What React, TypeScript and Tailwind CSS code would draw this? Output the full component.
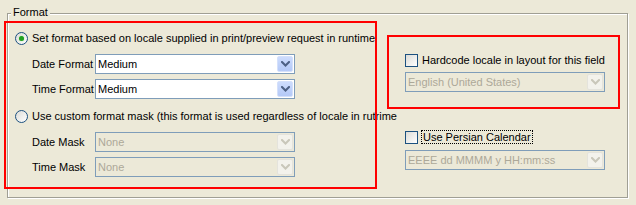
import React from "react";

function Chevron({ color }: { color: string }) {
  return (
    <svg width="9" height="6" viewBox="0 0 9 6" className="block">
      <path d="M1 1 L4.5 4.5 L8 1" fill="none" stroke={color} strokeWidth="2" strokeLinecap="square" />
    </svg>
  );
}

function Combo({ value, disabled = false }: { value: string; disabled?: boolean }) {
  return (
    <div
      className={`w-[200px] h-[20px] border border-[#7f9db9] flex items-center p-[1px] ${
        disabled ? "bg-[#ece9d8]" : "bg-white"
      }`}
    >
      <span
        className={`flex-1 pl-[1px] text-[11px] leading-[13px] whitespace-nowrap ${
          disabled ? "text-[#aca899]" : "text-black"
        }`}
      >
        {value}
      </span>
      {disabled ? (
        <div className="w-[16px] h-[16px] rounded-[2px] border border-[#e4e3dc] bg-[#f3f2ec] flex items-center justify-center">
          <Chevron color="#c9c7ba" />
        </div>
      ) : (
        <div className="w-[16px] h-[16px] rounded-[2px] border border-[#d4e0fb] bg-linear-to-b from-[#cddcfd] to-[#b4c9f7] flex items-center justify-center">
          <Chevron color="#4d6185" />
        </div>
      )}
    </div>
  );
}

function Radio({ checked = false }: { checked?: boolean }) {
  return (
    <div className="w-[13px] h-[13px] shrink-0 rounded-full border border-[#1c5180] bg-linear-to-br from-[#dcdcd7] to-white flex items-center justify-center">
      {checked && <div className="w-[5px] h-[5px] rounded-full bg-[#21a121] shadow-[0_0_1px_#7fd67f]" />}
    </div>
  );
}

function Check() {
  return <div className="w-[13px] h-[13px] shrink-0 border border-[#1c5180] bg-linear-to-br from-[#dcdcd7] to-white" />;
}

function LabeledCombo({ label, value, disabled }: { label: string; value: string; disabled?: boolean }) {
  return (
    <div className="flex items-center ml-[17px]">
      <span className="w-[63px] text-[11px] leading-[13px] whitespace-nowrap">{label}</span>
      <Combo value={value} disabled={disabled} />
    </div>
  );
}

export default function App() {
  return (
    <div className="relative w-[636px] h-[205px] bg-[#ece9d8] overflow-hidden text-black font-['Liberation_Sans',Arial,sans-serif] pt-[13px] pl-[7px]">
      <div className="relative w-[621px] h-[185px] border border-[#a09f94] shadow-[inset_1px_1px_0_#fff,1px_1px_0_#fff]">
        <span className="absolute left-[3px] top-[-8px] px-[2px] bg-[#ece9d8] text-[11px] leading-[13px]">Format</span>

        <div className="flex">
          {/* left column */}
          <div className="w-[380px] pl-[7px] pt-[15px] flex flex-col">
            <div className="h-[18px] flex items-center gap-[4px]">
              <Radio checked />
              <span className="text-[11px] leading-[13px] whitespace-nowrap">
                Set format based on locale supplied in print/preview request in runtime
              </span>
            </div>
            <div className="mt-[7px]">
              <LabeledCombo label="Date Format" value="Medium" />
            </div>
            <div className="mt-[5px]">
              <LabeledCombo label="Time Format" value="Medium" />
            </div>
            <div className="mt-[8px] h-[18px] flex items-center gap-[4px]">
              <Radio />
              <span className="text-[11px] leading-[13px] whitespace-nowrap">
                Use custom format mask (this format is used regardless of locale in rutrime
              </span>
            </div>
            <div className="mt-[7px]">
              <LabeledCombo label="Date Mask" value="None" disabled />
            </div>
            <div className="mt-[5px]">
              <LabeledCombo label="Time Mask" value="None" disabled />
            </div>
          </div>

          {/* right column */}
          <div className="flex-1 pl-[17px] pt-[37px] flex flex-col">
            <div className="h-[18px] flex items-center gap-[4px]">
              <Check />
              <span className="text-[11px] leading-[13px] whitespace-nowrap">Hardcode locale in layout for this field</span>
            </div>
            <div className="mt-[3px]">
              <Combo value="English (United States)" disabled />
            </div>
            <div className="mt-[36px] h-[18px] flex items-center gap-[3px]">
              <Check />
              <span className="text-[11px] leading-[12px] whitespace-nowrap border border-dotted border-black px-[1px]">
                Use Persian Calendar
              </span>
            </div>
            <div className="mt-[4px]">
              <Combo value="EEEE dd MMMM y HH:mm:ss" disabled />
            </div>
          </div>
        </div>
      </div>

      {/* red annotation frames */}
      <div className="absolute left-[4px] top-[21px] w-[373px] h-[168px] border-2 border-[#ff0000] pointer-events-none" />
      <div className="absolute left-[387px] top-[35px] w-[233px] h-[74px] border-2 border-[#ff0000] pointer-events-none" />
    </div>
  );
}
